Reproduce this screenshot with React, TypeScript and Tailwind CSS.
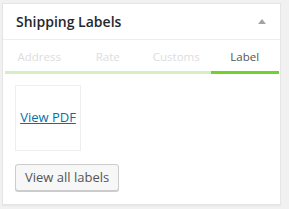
import { useState } from 'react';

const steps = ['Address', 'Rate', 'Customs', 'Label'];

export default function App() {
  const [current] = useState(3);

  return (
    <div
      className="w-[289px] h-[209px] bg-[#f1f1f1] pt-[3px] pl-[2px] overflow-hidden"
      style={{ fontFamily: '"Open Sans", "Noto Sans", sans-serif' }}
    >
      <div className="w-[279px] h-[202px] bg-white border border-[#e5e5e5] shadow-[0_1px_1px_rgba(0,0,0,0.04)] flex flex-col">
        {/* Header */}
        <div className="h-[36px] border-b border-[#eeeeee] flex items-center justify-between pl-[13px] pr-[14px]">
          <h2 className="text-[14px] font-semibold text-[#23282d] leading-none">Shipping Labels</h2>
          <span className="w-0 h-0 border-l-[4px] border-r-[4px] border-b-[5px] border-l-transparent border-r-transparent border-b-[#a0a5aa]" />
        </div>

        {/* Steps */}
        <div className="pl-[2px] pr-[1px]">
          <div className="grid grid-cols-4">
            {steps.map((step, i) => (
              <div key={step} className="flex flex-col items-center">
                <span
                  className={`text-[11.5px] leading-[18px] pt-[8px] pb-[5px] ${
                    i === current ? 'text-[#555555]' : 'text-[#dddddd]'
                  }`}
                >
                  {step}
                </span>
                <div className={`w-full h-[3px] ${i === current ? 'bg-[#73d12d]' : 'bg-[#d6eec4]'}`} />
              </div>
            ))}
          </div>
        </div>

        {/* Content */}
        <div className="pl-[12px] pt-[11px] flex flex-col gap-[13px]">
          <div className="w-[66px] h-[66px] border border-[#eeeeee] flex items-center justify-center">
            <a href="#" className="text-[13px] text-[#0073aa] underline">View PDF</a>
          </div>
          <div>
            <button className="h-[27px] px-[9px] bg-[#f7f7f7] border border-[#cccccc] rounded-[3px] shadow-[0_1px_0_#cccccc] text-[13px] text-[#555555] leading-none">
              View all labels
            </button>
          </div>
        </div>
      </div>
    </div>
  );
}
